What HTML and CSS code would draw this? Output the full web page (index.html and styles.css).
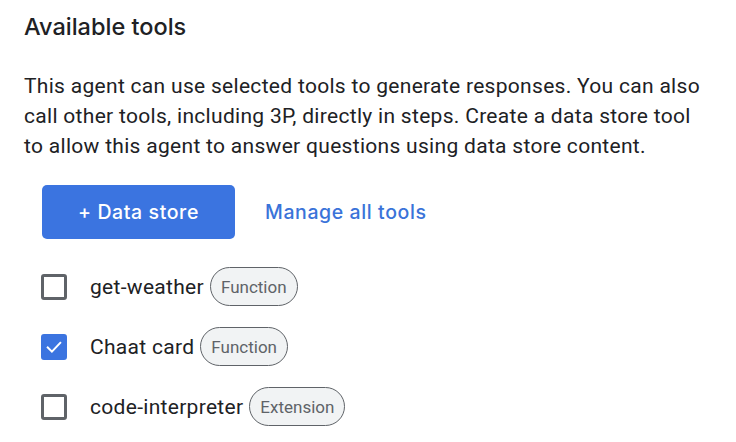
FILE: index.html
```html
<!DOCTYPE html>
<html>
<head>
<meta charset="utf-8">
<link rel="stylesheet" href="styles.css">
</head>
<body>
<div class="panel">
  <h1 class="title">Available tools</h1>
  <p class="desc">This agent can use selected tools to generate responses. You can also call other tools, including 3P, directly in steps. Create a data store tool to allow this agent to answer questions using data store content.</p>
  <div class="actions">
    <button class="btn-primary">+ Data store</button>
    <a class="link">Manage all tools</a>
  </div>
  <ul class="tools">
    <li class="tool">
      <span class="cb"></span>
      <span class="name">get-weather</span>
      <span class="chip">Function</span>
    </li>
    <li class="tool">
      <span class="cb checked"><svg viewBox="0 0 24 24" width="24" height="24"><path d="M4.5 12.5l5 5 10-10.5" fill="none" stroke="#fff" stroke-width="2.4" stroke-linecap="square"/></svg></span>
      <span class="name">Chaat card</span>
      <span class="chip">Function</span>
    </li>
    <li class="tool">
      <span class="cb"></span>
      <span class="name">code-interpreter</span>
      <span class="chip">Extension</span>
    </li>
  </ul>
</div>
</body>
</html>
```

FILE: styles.css
```css
html, body {
  margin: 0;
  padding: 0;
  background: #fff;
}
body {
  font-family: Roboto, "Liberation Sans", sans-serif;
  color: #202124;
}
.panel {
  padding: 12px 24px 0 24px;
}
.title {
  margin: 0;
  font-family: Inter, Roboto, sans-serif;
  font-size: 23.5px;
  line-height: 30px;
  font-weight: 500;
  color: #202124;
}
.desc {
  margin: 29px 0 0 0;
  font-size: 21px;
  letter-spacing: 0.3px;
  line-height: 30px;
  color: #202124;
}
.actions {
  display: flex;
  align-items: center;
  gap: 30px;
  margin: 24px 0 0 18px;
}
.btn-primary {
  width: 193px;
  height: 54px;
  border: none;
  border-radius: 5px;
  background: #3b74e0;
  color: #fff;
  font-family: Inter, Roboto, sans-serif;
  font-size: 19.5px;
  letter-spacing: 0.6px;
  font-weight: 500;
  padding: 0;
}
.link {
  font-family: Inter, Roboto, sans-serif;
  color: #3a73d9;
  font-size: 19.5px;
  letter-spacing: 0.6px;
  font-weight: 500;
}
.tools {
  list-style: none;
  margin: 28px 0 0 17px;
  padding: 0;
  display: flex;
  flex-direction: column;
  gap: 21px;
}
.tool {
  display: flex;
  align-items: center;
  height: 39px;
}
.cb {
  box-sizing: border-box;
  width: 26px;
  height: 26px;
  border: 3px solid #5f6368;
  border-radius: 3px;
  display: flex;
  align-items: center;
  justify-content: center;
  margin-right: 23px;
}
.cb.checked {
  background: #3b74e0;
  border-color: #3b74e0;
}
.name {
  font-size: 21px;
  letter-spacing: 0.3px;
  color: #202124;
  margin-right: 6px;
}
.chip {
  box-sizing: border-box;
  height: 39px;
  display: inline-flex;
  align-items: center;
  padding: 0 10px;
  border: 1px solid #5f6368;
  border-radius: 20px;
  background: #f1f3f4;
  color: #5f6368;
  font-size: 17px;
}
```
